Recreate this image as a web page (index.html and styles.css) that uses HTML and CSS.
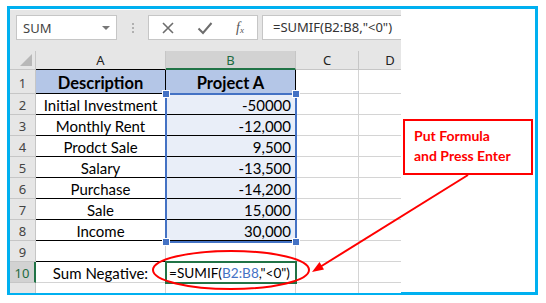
FILE: index.html
```html
<!DOCTYPE html>
<html>
<head>
<meta charset="utf-8">
<link rel="stylesheet" href="styles.css">
</head>
<body>
<div class="frame">
  <div class="excel">
    <div class="toolbar">
      <div class="namebox"><span>SUM</span><span class="dd"></span></div>
      <div class="dots"><i></i><i></i><i></i></div>
      <div class="btns">
        <svg class="ico" width="14" height="14" viewBox="0 0 14 14"><path d="M2 2L12 12M12 2L2 12" stroke="#6d6d6d" stroke-width="1.6" fill="none"/></svg>
        <svg class="ico" width="16" height="14" viewBox="0 0 16 14"><path d="M1.5 7.5L6 12L14.5 2" stroke="#6d6d6d" stroke-width="2" fill="none"/></svg>
        <span class="fx">f<sub>x</sub></span>
      </div>
      <div class="finput">=SUMIF(B2:B8,"&lt;0")</div>
    </div>
    <div class="sheet">
      <div class="grid">
        <div class="ch corner"><span class="tri"></span></div>
        <div class="ch ca">A</div>
        <div class="ch cb">B</div>
        <div class="ch">C</div>
        <div class="ch">D</div>

        <div class="rh">1</div>
        <div class="c hd bk">Description</div>
        <div class="c hd bk">Project A</div>
        <div class="c"></div><div class="c"></div>

        <div class="rh">2</div>
        <div class="c ta bk">Initial Investment</div>
        <div class="c num bk">-50000</div>
        <div class="c"></div><div class="c"></div>

        <div class="rh">3</div>
        <div class="c ta bk">Monthly Rent</div>
        <div class="c num bk">-12,000</div>
        <div class="c"></div><div class="c"></div>

        <div class="rh">4</div>
        <div class="c ta bk">Prodct Sale</div>
        <div class="c num bk">9,500</div>
        <div class="c"></div><div class="c"></div>

        <div class="rh">5</div>
        <div class="c ta bk">Salary</div>
        <div class="c num bk">-13,500</div>
        <div class="c"></div><div class="c"></div>

        <div class="rh">6</div>
        <div class="c ta bk">Purchase</div>
        <div class="c num bk">-14,200</div>
        <div class="c"></div><div class="c"></div>

        <div class="rh">7</div>
        <div class="c ta bk">Sale</div>
        <div class="c num bk">15,000</div>
        <div class="c"></div><div class="c"></div>

        <div class="rh">8</div>
        <div class="c ta bk">Income</div>
        <div class="c num bk">30,000</div>
        <div class="c"></div><div class="c"></div>

        <div class="rh">9</div>
        <div class="c bkb"></div>
        <div class="c"></div>
        <div class="c"></div><div class="c"></div>

        <div class="rh sel">10</div>
        <div class="c ta">Sum Negative:</div>
        <div class="c fcell">=SUMIF(<span class="ref">B2:B8</span>,"&lt;0")</div>
        <div class="c"></div><div class="c"></div>

        <div class="rh"></div>
        <div class="c"></div>
        <div class="c"></div>
        <div class="c"></div><div class="c"></div>
      </div>
      <div class="range">
        <span class="h tl"></span><span class="h tr"></span><span class="h bl"></span><span class="h br"></span>
      </div>
      <div class="active"></div>
    </div>
  </div>
</div>
<div class="callout">Put Formula<br>and Press Enter</div>
<svg class="overlay" width="546" height="303" viewBox="0 0 546 303">
  <ellipse cx="231" cy="270" rx="78" ry="19" fill="none" stroke="#f00" stroke-width="2"/>
  <line x1="468" y1="175" x2="320" y2="267" stroke="#f00" stroke-width="2"/>
  <polygon points="312,272 324,269.5 319.5,262" fill="#f00"/>
</svg>
</body>
</html>
```
FILE: styles.css
```css
html, body { margin: 0; padding: 0; background: #fff; }
body { width: 546px; height: 303px; position: relative; overflow: hidden; }

.frame {
  margin: 6px 0 0 7px;
  width: 531px;
  height: 289px;
  box-sizing: border-box;
  border: 3px solid #00b0f0;
  padding: 1px 0 0 0;
  background: #fff;
}

.excel {
  width: 391px;
  height: 283px;
  background: #e6e6e6;
  overflow: hidden;
  display: flex;
  flex-direction: column;
}

.toolbar {
  height: 41px;
  flex: none;
  display: flex;
  align-items: flex-start;
  padding: 5px 0 0 6px;
  box-sizing: border-box;
  font-family: "Noto Sans", sans-serif;
}

.namebox {
  width: 101px;
  height: 25px;
  box-sizing: border-box;
  background: #fff;
  border: 1px solid #c6c6c6;
  display: flex;
  align-items: center;
  justify-content: space-between;
  padding: 0 6px 0 6px;
  font-size: 13px;
  color: #444;
}
.dd {
  width: 0; height: 0;
  border-left: 4px solid transparent;
  border-right: 4px solid transparent;
  border-top: 4px solid #777;
}

.dots {
  width: 31px;
  height: 25px;
  display: flex;
  flex-direction: column;
  align-items: center;
  justify-content: center;
  gap: 2px;
}
.dots i { display: block; width: 2px; height: 2px; background: #b0b0b0; }

.btns {
  width: 110px;
  height: 25px;
  box-sizing: border-box;
  background: #fff;
  border: 1px solid #c6c6c6;
  display: flex;
  align-items: center;
  padding: 0 0 0 12px;
  gap: 22px;
}
.fx {
  font-family: "Liberation Serif", serif;
  font-style: italic;
  font-size: 14px;
  color: #555;
  margin-left: 1px;
}
.fx sub { font-size: 9px; vertical-align: -1px; }

.finput {
  flex: 1;
  margin-left: 4px;
  height: 25px;
  box-sizing: border-box;
  background: #fff;
  border: 1px solid #c6c6c6;
  border-right: none;
  padding: 0 0 0 10px;
  font-size: 13px;
  line-height: 23px;
  color: #333;
  white-space: nowrap;
}

.sheet { position: relative; flex: 1; background: #fff; }

.grid {
  display: grid;
  grid-template-columns: 26px 130px 130px 63px 63px;
  grid-template-rows: 19px 24px repeat(9, 21px) 21px;
  font-family: Lato, "Liberation Sans", sans-serif;
  font-size: 15px;
  color: #000;
}

.ch {
  background: #e6e6e6;
  border-right: 1px solid #c6c6c6;
  border-bottom: 1px solid #c6c6c6;
  box-sizing: border-box;
  font-family: "Noto Sans", sans-serif;
  font-size: 13px;
  color: #222;
  text-align: center;
  line-height: 19px;
}
.ch.corner { position: relative; }
.tri {
  position: absolute;
  right: 3px; bottom: 3px;
  width: 0; height: 0;
  border-left: 12px solid transparent;
  border-bottom: 12px solid #b8b8b8;
}
.ch.ca { border-bottom-color: #000; }
.ch.cb {
  background: #d2d2d2;
  border-bottom: 2px solid #217346;
  color: #1d6b40;
  line-height: 18px;
}

.rh {
  background: #e6e6e6;
  border-right: 1px solid #c6c6c6;
  border-bottom: 1px solid #c6c6c6;
  box-sizing: border-box;
  font-family: "Noto Sans", sans-serif;
  font-size: 13px;
  color: #444;
  text-align: center;
  display: flex;
  align-items: center;
  justify-content: center;
  padding-top: 2px;
}
.rh.sel {
  background: #d2d2d2;
  border-right: 2px solid #217346;
  color: #1d6b40;
}

.c {
  border-right: 1px solid #d4d4d4;
  border-bottom: 1px solid #d4d4d4;
  box-sizing: border-box;
  white-space: nowrap;
  overflow: hidden;
  display: flex;
  align-items: center;
  padding-top: 2px;
}
.c.bk { border-right-color: #000; border-bottom-color: #000; }
.c.bkb { border-bottom-color: #000; }
.c.hd {
  background: #b4c6e7;
  font-weight: bold;
  font-size: 16.5px;
  justify-content: center;
}
.c.ta { justify-content: center; }
.c.num { background: #e9eef8; justify-content: flex-end; padding-right: 4px; }
.c.fcell { padding-left: 3px; overflow: visible; font-size: 13.6px; }
.ref { color: #4472c4; }

.range {
  position: absolute;
  left: 155px;
  top: 42px;
  width: 132px;
  height: 150px;
  box-sizing: border-box;
  border: 2px solid #4472c4;
}
.h {
  position: absolute;
  width: 6px; height: 6px;
  background: #4472c4;
  border: 1px solid #fff;
}
.h.tl { left: -5px; top: -5px; }
.h.tr { right: -5px; top: -5px; }
.h.bl { left: -5px; bottom: -5px; }
.h.br { right: -5px; bottom: -5px; }

.active {
  position: absolute;
  left: 155px;
  top: 210px;
  width: 132px;
  height: 23px;
  box-sizing: border-box;
  border: 2px solid #217346;
}

.callout {
  position: absolute;
  left: 403px;
  top: 119px;
  width: 130px;
  height: 56px;
  box-sizing: border-box;
  border: 2px solid #f00;
  background: #fff;
  padding: 5px 0 0 9px;
  font-family: Lato, "Liberation Sans", sans-serif;
  font-weight: bold;
  font-size: 14px;
  line-height: 20px;
  color: #f00;
}

.overlay { position: absolute; left: 0; top: 0; pointer-events: none; }
```
